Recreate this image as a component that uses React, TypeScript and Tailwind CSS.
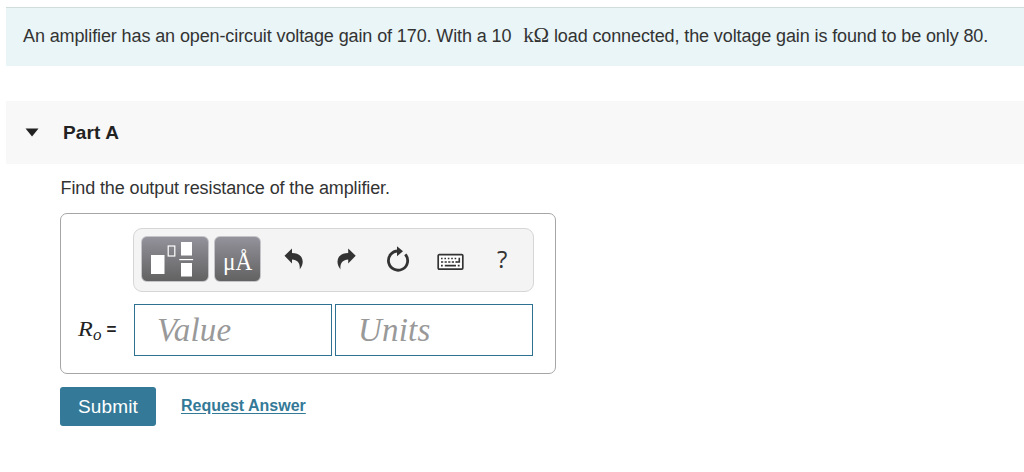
import type { ReactNode } from "react";

const UndoIcon = () => (
  <svg width="20" height="22" viewBox="0 0 20 22" fill="#333">
    <path d="M0.5 7.7 8 0.5V5C14.5 5.2 18.5 8 18.7 13.5C18.8 16.5 17.6 19 15.7 21.5C16.4 15.5 13.8 11.8 8 11.5V15.4Z" />
  </svg>
);

const RedoIcon = () => (
  <svg width="20" height="22" viewBox="0 0 20 22" fill="#333">
    <path d="M18.7 7.7 11.2 0.5V5C4.7 5.2 0.7 8 0.5 13.5C0.4 16.5 1.6 19 3.5 21.5C2.8 15.5 5.4 11.8 11.2 11.5V15.4Z" />
  </svg>
);

const ResetIcon = () => (
  <svg width="24" height="26" viewBox="0 0 24 26">
    <path d="M12 5A9.6 9.6 0 1 0 19.3 8.3" fill="none" stroke="#333" strokeWidth="2.8" />
    <path d="M11 0.3 17 5.2 11 10.2Z" fill="#333" />
  </svg>
);

const KeyboardIcon = () => (
  <svg width="27" height="18" viewBox="0 0 27 18">
    <rect x="1.2" y="1.7" width="24.6" height="14.4" rx="1" fill="#fff" stroke="#333" strokeWidth="1.7" />
    <g stroke="#333" strokeWidth="1.6">
      <path d="M4 5.5H20" strokeDasharray="1.6 1.8" />
      <path d="M4 9H20" strokeDasharray="2.2 1.4" />
      <path d="M22.3 4.7V9H19.5" fill="none" />
      <path d="M4 12.6H5.8M7.8 12.6H19M20.8 12.6H22.6" />
    </g>
  </svg>
);

const TemplateIcon = () => (
  <svg width="43" height="35" viewBox="0 0 43 35" fill="#fff">
    <rect x="0" y="13" width="13.5" height="19" />
    <rect x="17.2" y="4" width="6.6" height="10" fill="none" stroke="#fff" strokeWidth="1.2" />
    <rect x="30" y="0" width="11" height="13.5" />
    <rect x="28.3" y="17" width="13.8" height="1.2" />
    <rect x="30" y="21" width="11" height="13.5" />
  </svg>
);

const DarkButton = ({ children, className }: { children: ReactNode; className: string }) => (
  <button
    className={`h-[46px] rounded-[6px] border border-[#c5c5c9] bg-linear-to-b from-[#94929b] to-[#626262] text-white ${className}`}
  >
    {children}
  </button>
);

const Toolbar = () => (
  <div className="flex h-16 w-[401px] items-center rounded-[9px] border border-[#d6d6d6] bg-[#f4f4f4] pb-[2px] pl-[7px]">
    <DarkButton className="w-[68px] pl-[9px]">
      <TemplateIcon />
    </DarkButton>
    <DarkButton className="ml-[5px] w-[47px] pt-1 font-['Liberation_Serif',serif] text-[25px] leading-none">
      <span className="inline-block scale-x-[0.93]">μÅ</span>
    </DarkButton>
    <button className="ml-[23px]">
      <UndoIcon />
    </button>
    <button className="ml-[33px]">
      <RedoIcon />
    </button>
    <button className="ml-[29px]">
      <ResetIcon />
    </button>
    <button className="mt-[5px] ml-[27px]">
      <KeyboardIcon />
    </button>
    <button className="ml-[33px] font-['Open_Sans',sans-serif] text-[24px] leading-none text-[#333]">
      ?
    </button>
  </div>
);

const AnswerField = ({ label }: { label: string }) => (
  <input
    placeholder={label}
    className="h-[52px] w-[198px] border border-[#2f7192] bg-white pl-[22px] font-['Liberation_Serif',serif] text-[33px] tracking-[0.2px] italic placeholder:text-[#999] placeholder:opacity-100"
  />
);

export default function App() {
  return (
    <main className="h-[472px] overflow-hidden bg-white pt-[7px] pl-[6px] font-['Liberation_Sans',Arial,sans-serif] text-[#333]">
      <section className="flex h-[59px] items-center border-t border-[#d1dcdc] bg-[#e9f5f7] pb-[2px] pl-[17px] text-[18px] tracking-[-0.11px] whitespace-pre">
        <p>
          An amplifier has an open-circuit voltage gain of 170. With a 10{"  "}
          <span className="ml-[2px] font-['Liberation_Serif',serif] text-[21px] leading-none">kΩ</span> load connected, the
          voltage gain is found to be only 80.
        </p>
      </section>

      <header className="mt-[35px] flex h-[63px] items-center bg-[#f8f8f8] pl-[19px]">
        <svg width="14" height="9" viewBox="0 0 14 9" fill="#222">
          <path d="M0.5 0.5H13.5L7 8.5Z" />
        </svg>
        <h2 className="ml-[24px] pt-[2px] text-[19px] font-bold tracking-[0.15px] text-[#222]">Part A</h2>
      </header>

      <section className="pl-[54px]">
        <p className="mt-[11px] pl-[0.5px] text-[18px] leading-[26px] tracking-[-0.11px]">
          Find the output resistance of the amplifier.
        </p>

        <div className="mt-[12px] h-[161px] w-[496px] rounded-[7px] border-[1.5px] border-[#a6a6a6] pt-[14px]">
          <div className="pl-[72px]">
            <Toolbar />
          </div>
          <div className="mt-[12px] flex items-center">
            <label className="flex w-[73px] items-baseline pb-[4px] pl-[17px] text-[#222]">
              <span className="inline-block w-[15px] origin-left scale-x-110 font-['Liberation_Serif',serif] text-[22px] italic">
                R
              </span>
              <span className="relative top-1 font-['Liberation_Serif',serif] text-[17px] italic">o</span>
              <span className="relative -top-px ml-[5px] text-[17px] font-bold">=</span>
            </label>
            <div className="flex gap-[3px]">
              <AnswerField label="Value" />
              <AnswerField label="Units" />
            </div>
          </div>
        </div>

        <div className="mt-[13px] flex items-center">
          <button className="h-[39px] w-[96px] rounded-[3px] bg-[#347997] pt-px text-[19px] tracking-[0.15px] text-white">
            Submit
          </button>
          <a
            href="#"
            className="ml-[25px] pb-px text-[16px] font-bold text-[#347997] underline underline-offset-2"
          >
            Request Answer
          </a>
        </div>
      </section>
    </main>
  );
}
